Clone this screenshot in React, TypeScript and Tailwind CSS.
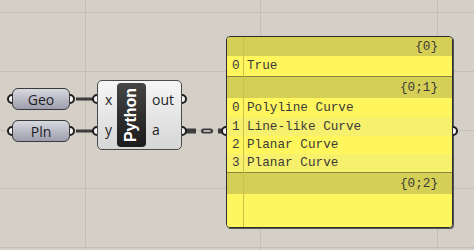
import React from 'react';

const mono = { fontFamily: '"Liberation Mono", "Courier New", monospace' };

// Panel rows: index + value, with alternating shade
function PanelRow({ i, text, h, alt }: { i: number; text: string; h: string; alt?: boolean }) {
  return (
    <div className={`flex items-center ${h} ${alt ? 'bg-[#f7f06c]' : 'bg-[#fef65c]'}`}>
      <span className="w-[17px] pl-[5px] shrink-0">{i}</span>
      <span className="pl-[3px]">{text}</span>
    </div>
  );
}

function PathHeader({ label, h }: { label: string; h: string }) {
  return (
    <div className={`flex items-center justify-end pr-[14px] bg-[#d6cf55] ${h}`}>{label}</div>
  );
}

function Grip({ x, y, side }: { x: number; y: number; side: 'l' | 'r' }) {
  const d =
    side === 'l'
      ? `M ${x} ${y - 4} A 4 4 0 0 0 ${x} ${y + 4}`
      : `M ${x} ${y - 4} A 4 4 0 0 1 ${x} ${y + 4}`;
  return <path d={d} fill="#f4f4f4" stroke="#1e1e1e" strokeWidth={2} />;
}

function Param({ label, top }: { label: string; top: string }) {
  return (
    <div
      className={`absolute left-[12px] ${top} w-[58px] h-[22px] rounded-[6px] border border-[#3a3a3a] bg-gradient-to-b from-[#d9d9e1] to-[#9d9dad] flex items-center justify-center text-[14px] text-[#1f1f1f]`}
      style={{ fontFamily: '"Open Sans", "Liberation Sans", sans-serif' }}
    >
      {label}
    </div>
  );
}

export default function App() {
  return (
    <div className="relative w-[474px] h-[250px] overflow-hidden bg-[#d4d0c8]">
      {/* canvas grid */}
      <div className="absolute left-0 right-0 top-[12px] h-px bg-[#c3bfb7]" />
      <div className="absolute left-0 right-0 top-[71px] h-px bg-[#c3bfb7]" />
      <div className="absolute left-0 right-0 top-[130px] h-px bg-[#c3bfb7]" />
      <div className="absolute left-0 right-0 top-[188px] h-px bg-[#c3bfb7]" />
      <div className="absolute left-0 right-0 top-[247px] h-px bg-[#c3bfb7]" />
      <div className="absolute top-0 bottom-0 left-[85px] w-px bg-[#c3bfb7]" />
      <div className="absolute top-0 bottom-0 left-[260px] w-px bg-[#c3bfb7]" />
      <div className="absolute top-0 bottom-0 left-[437px] w-px bg-[#c3bfb7]" />

      {/* inputs */}
      <Param label="Geo" top="top-[88px]" />
      <Param label="Pln" top="top-[120px]" />

      {/* python component */}
      <div
        className="absolute left-[97px] top-[80px] w-[85px] h-[70px] rounded-[5px] border border-[#4a4a4a] bg-gradient-to-b from-[#f6f6f6] to-[#d6d6d6] flex items-stretch text-[14px] text-[#1f1f1f]"
        style={{ fontFamily: '"Open Sans", "Liberation Sans", sans-serif' }}
      >
        <div className="w-[19px] flex flex-col justify-around pl-[7px] py-[4px]">
          <span className="leading-none">x</span>
          <span className="leading-none">y</span>
        </div>
        <div className="my-[2px] w-[29px] rounded-[4px] bg-gradient-to-b from-[#454545] to-[#1c1c1c] flex items-center justify-center overflow-hidden">
          <span
            className="-rotate-90 whitespace-nowrap text-white font-bold text-[16px]"
            style={{ fontFamily: '"Liberation Sans", Arial, sans-serif' }}
          >
            Python
          </span>
        </div>
        <div className="flex-1 flex flex-col justify-around pl-[6px] py-[4px]">
          <span className="leading-none">out</span>
          <span className="leading-none">a</span>
        </div>
      </div>

      {/* panel */}
      <div
        className="absolute left-[226px] top-[36px] w-[227px] h-[192px] rounded-[4px] border border-[#2e2e2e] shadow-[1px_1px_0_#555] overflow-hidden flex flex-col text-[12.7px] text-[#3a3a3a]"
        style={mono}
      >
        <PathHeader label="{0}" h="h-[19px]" />
        <PanelRow i={0} text="True" h="h-[20px]" />
        <div className="h-px bg-[#8b8540]" />
        <PathHeader label="{0;1}" h="h-[21px]" />
        <PanelRow i={0} text="Polyline Curve" h="h-[19px]" />
        <PanelRow i={1} text="Line-like Curve" h="h-[19px]" alt />
        <PanelRow i={2} text="Planar Curve" h="h-[18px]" />
        <PanelRow i={3} text="Planar Curve" h="h-[18px]" alt />
        <div className="h-px bg-[#8b8540]" />
        <PathHeader label="{0;2}" h="h-[21px]" />
        <div className="flex-1 bg-[#fef65e]" />
        <div className="absolute left-[16px] top-0 bottom-0 w-px bg-[#c9c24a]" />
      </div>

      {/* wires and grips */}
      <svg className="absolute inset-0" width={474} height={250}>
        <line x1={76} y1={99} x2={93} y2={99} stroke="#3c3c3c" strokeWidth={3} />
        <line x1={76} y1={131} x2={93} y2={131} stroke="#3c3c3c" strokeWidth={3} />
        <line x1={186} y1={131} x2={196} y2={131} stroke="#3c3c3c" strokeWidth={5} />
        <rect x={201} y={128.5} width={12} height={5} rx={2.5} fill="#3c3c3c" />
        <line x1={203.5} y1={131} x2={210.5} y2={131} stroke="#d8d8d8" strokeWidth={1.5} />
        <line x1={218} y1={131} x2={223} y2={131} stroke="#3c3c3c" strokeWidth={5} />
        <Grip x={12} y={99} side="l" />
        <Grip x={70} y={99} side="r" />
        <Grip x={12} y={131} side="l" />
        <Grip x={70} y={131} side="r" />
        <Grip x={97} y={99} side="l" />
        <Grip x={97} y={131} side="l" />
        <Grip x={182} y={99} side="r" />
        <Grip x={182} y={131} side="r" />
        <Grip x={226} y={131} side="l" />
        <Grip x={453} y={131} side="r" />
      </svg>
    </div>
  );
}
